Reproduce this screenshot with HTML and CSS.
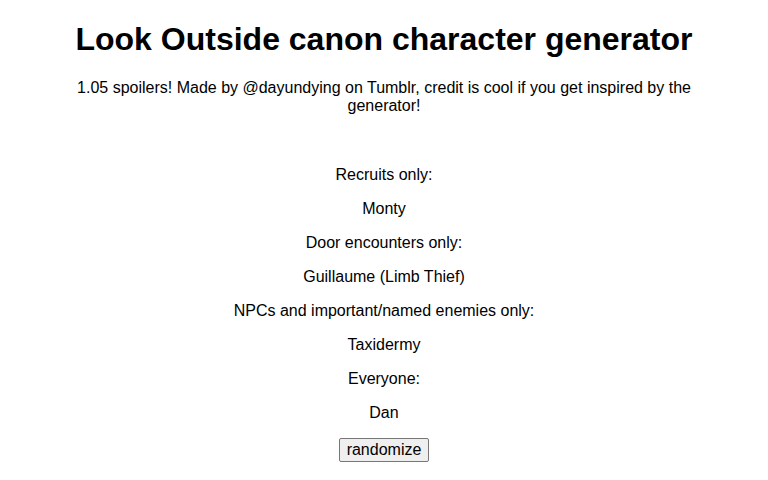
FILE: index.html
```html
<!DOCTYPE html>
<html lang="en">
<head>
<meta charset="utf-8">
<title>Look Outside canon character generator</title>
<link rel="stylesheet" href="styles.css">
</head>
<body>
<main class="page">
  <h1 class="title">Look Outside canon character generator</h1>
  <p class="intro">1.05 spoilers! Made by @dayundying on Tumblr, credit is cool if you get inspired by the generator!</p>

  <section class="results">
    <p class="label">Recruits only:</p>
    <p class="pick">Monty</p>
    <p class="label">Door encounters only:</p>
    <p class="pick">Guillaume (Limb Thief)</p>
    <p class="label">NPCs and important/named enemies only:</p>
    <p class="pick">Taxidermy</p>
    <p class="label">Everyone:</p>
    <p class="pick">Dan</p>
    <button class="randomize" type="button">randomize</button>
  </section>
</main>
</body>
</html>
```

FILE: styles.css
```css
html, body {
  margin: 0;
  padding: 0;
  background: #ffffff;
}

body {
  font-family: "Liberation Sans", Arial, sans-serif;
  font-size: 16px;
  color: #000000;
}

.page {
  padding: 0 8px;
  text-align: center;
}

.title {
  font-size: 32px;
  font-weight: bold;
  line-height: 37px;
  margin: 21px 0 21px;
}

.intro {
  margin: 0;
  padding: 0 68px;
  line-height: 18px;
}

.results {
  padding-top: 51px;
  display: flex;
  flex-direction: column;
  align-items: center;
}

.results p {
  margin: 0 0 16px;
  line-height: 18px;
}

.randomize {
  font-family: "Liberation Sans", Arial, sans-serif;
  font-size: 16px;
  line-height: 18px;
  color: #000000;
  background: #efefef;
  border: 1px solid #767676;
  border-radius: 2px;
  padding: 2px 7px;
}
```
